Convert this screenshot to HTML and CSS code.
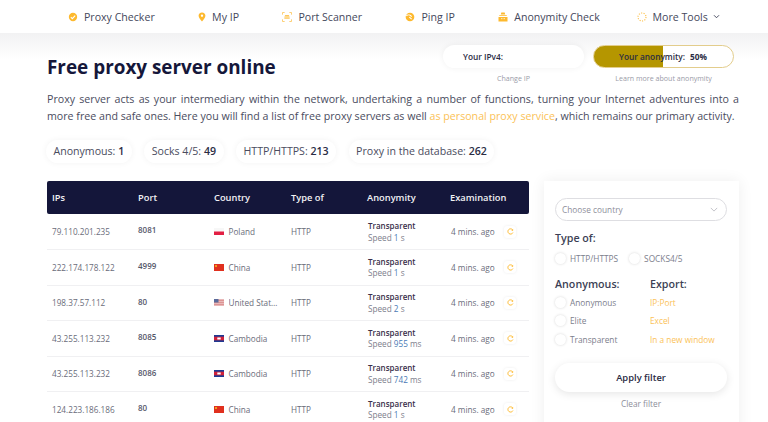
FILE: index.html
```html
<!DOCTYPE html>
<html lang="en">
<head>
<meta charset="utf-8">
<title>Free proxy server online</title>
<link rel="stylesheet" href="styles.css">
</head>
<body>
<nav class="nav">
  <a class="nav-item"><svg class="ico" viewBox="0 0 12 12"><circle cx="6" cy="6" r="5" fill="#fdb92e"/><path d="M3.4 6.2 5.2 8l3.4-3.6" fill="none" stroke="#fff" stroke-width="1.3"/></svg>Proxy Checker</a>
  <a class="nav-item"><svg class="ico ico-pin" viewBox="0 0 9 12"><path d="M4.5.6C2 .6.4 2.4.4 4.6c0 2.6 2.6 5 4.1 6.8C6 9.600 8.600 7.200 8.600 4.600 8.600 2.400 7 .6 4.500.6Z" fill="#fdb92e"/><circle cx="4.500" cy="4.500" r="1.400" fill="#fff"/></svg>My IP</a>
  <a class="nav-item"><svg class="ico" viewBox="0 0 12 12"><path d="M.6 3.200V.6h2.600M8.800.6h2.600v2.600M.6 8.800v2.600h2.600M8.800 11.400h2.600V8.800" fill="none" stroke="#fdc75a" stroke-width="1"/><path d="M2.800 6 3.800 3.500h4.400l1 2.500v2.200H2.800Z" fill="#fdc75a"/><path d="M2 6h8" stroke="#fff" stroke-width=".8"/></svg>Port Scanner</a>
  <a class="nav-item"><svg class="ico" viewBox="0 0 12 12"><circle cx="6" cy="6" r="5.200" fill="#fdb92e"/><path d="M1.500 4.500C3.500 3 6.500 3.500 8 5.500M8 8.500 5.200 6.200" fill="none" stroke="#fff" stroke-width="1.300"/></svg>Ping IP</a>
  <a class="nav-item"><svg class="ico" viewBox="0 0 12 12"><path d="M4 .5h4l.6 2.500H3.400ZM1.500 3.600h9v.9h-9ZM.6 6h10.800v5.500H.6Z" fill="#fdb92e"/><path d="M3.800 8h1.500M6.700 8h1.500" stroke="#fff" stroke-width="1"/></svg>Anonymity Check</a>
  <a class="nav-item nav-more"><svg class="ico" viewBox="0 0 12 12"><circle cx="6" cy="6" r="4.800" fill="none" stroke="#fdc04a" stroke-width="1.400" stroke-dasharray="1.300 1.700"/></svg>More Tools<svg class="chev" viewBox="0 0 8 6"><path d="M1 1.500 4 4.500 7 1.500" fill="none" stroke="#3c3f55" stroke-width="1.100"/></svg></a>
</nav>
<main class="main">
  <section class="top">
    <h1 class="title">Free proxy server online</h1>
    <div class="status">
      <div class="status-col">
        <div class="pill-ip">Your IPv4:</div>
        <a class="caption">Change IP</a>
      </div>
      <div class="status-col">
        <div class="pill-anon">Your anonymity:<b class="pct">50%</b></div>
        <a class="caption">Learn more about anonymity</a>
      </div>
    </div>
  </section>
  <p class="lead">Proxy server acts as your intermediary within the network, undertaking a number of functions, turning your Internet adventures into a more free and safe ones. Here you will find a list of free proxy servers as well <a class="link">as personal proxy service</a>, which remains our primary activity.</p>
  <ul class="stats">
    <li class="stat">Anonymous: <b>1</b></li>
    <li class="stat">Socks 4/5: <b>49</b></li>
    <li class="stat">HTTP/HTTPS: <b>213</b></li>
    <li class="stat">Proxy in the database: <b>262</b></li>
  </ul>
  <div class="content">
    <table class="proxies">
      <thead>
        <tr><th class="c-ip">IPs</th><th class="c-port">Port</th><th class="c-country">Country</th><th class="c-type">Type of</th><th class="c-anon">Anonymity</th><th class="c-exam">Examination</th></tr>
      </thead>
      <tbody>
        <tr><td>79.110.201.235</td><td class="port">8081</td><td><span class="country"><svg class="flag" viewBox="0 0 10 7"><rect width="10" height="3.500" fill="#f7f7f7"/><rect y="3.500" width="10" height="3.500" fill="#e21f43"/></svg>Poland</span></td><td>HTTP</td><td><b class="level">Transparent</b><span class="speed">Speed <i>1</i> s</span></td><td><span class="exam">4 mins. ago<span class="refresh"><svg viewBox="0 0 8 8"><path d="M6.500 2.200A3 3 0 1 0 6.800 5.200" fill="none" stroke="#fdb92e" stroke-width="1.100"/><path d="M7 .8v2.200H4.900" fill="#fdb92e"/></svg></span></span></td></tr>
        <tr><td>222.174.178.122</td><td class="port">4999</td><td><span class="country"><svg class="flag" viewBox="0 0 10 7"><rect width="10" height="7" fill="#e0301e"/><rect x="1" y="1" width="2" height="2" fill="#f0a01e"/></svg>China</span></td><td>HTTP</td><td><b class="level">Transparent</b><span class="speed">Speed <i>1</i> s</span></td><td><span class="exam">4 mins. ago<span class="refresh"><svg viewBox="0 0 8 8"><path d="M6.500 2.200A3 3 0 1 0 6.800 5.200" fill="none" stroke="#fdb92e" stroke-width="1.100"/><path d="M7 .8v2.200H4.900" fill="#fdb92e"/></svg></span></span></td></tr>
        <tr><td>198.37.57.112</td><td class="port">80</td><td><span class="country"><svg class="flag" viewBox="0 0 10 7"><rect width="10" height="7" fill="#e8b8b8"/><path d="M0 1.500h10M0 3.500h10M0 5.500h10" stroke="#d98a8a" stroke-width=".8"/><rect width="4.500" height="3.500" fill="#5a6a9a"/></svg><span class="clip">United States</span></span></td><td>HTTP</td><td><b class="level">Transparent</b><span class="speed">Speed <i>2</i> s</span></td><td><span class="exam">4 mins. ago<span class="refresh"><svg viewBox="0 0 8 8"><path d="M6.500 2.200A3 3 0 1 0 6.800 5.200" fill="none" stroke="#fdb92e" stroke-width="1.100"/><path d="M7 .8v2.200H4.900" fill="#fdb92e"/></svg></span></span></td></tr>
        <tr><td>43.255.113.232</td><td class="port">8085</td><td><span class="country"><svg class="flag" viewBox="0 0 10 7"><rect width="10" height="7" fill="#1f3a93"/><rect y="1.700" width="10" height="3.600" fill="#d0213a"/><rect x="3.300" y="2.500" width="3.400" height="2" fill="#fff"/></svg>Cambodia</span></td><td>HTTP</td><td><b class="level">Transparent</b><span class="speed">Speed <i>955</i> ms</span></td><td><span class="exam">4 mins. ago<span class="refresh"><svg viewBox="0 0 8 8"><path d="M6.500 2.200A3 3 0 1 0 6.800 5.200" fill="none" stroke="#fdb92e" stroke-width="1.100"/><path d="M7 .8v2.200H4.900" fill="#fdb92e"/></svg></span></span></td></tr>
        <tr><td>43.255.113.232</td><td class="port">8086</td><td><span class="country"><svg class="flag" viewBox="0 0 10 7"><rect width="10" height="7" fill="#1f3a93"/><rect y="1.700" width="10" height="3.600" fill="#d0213a"/><rect x="3.300" y="2.500" width="3.400" height="2" fill="#fff"/></svg>Cambodia</span></td><td>HTTP</td><td><b class="level">Transparent</b><span class="speed">Speed <i>742</i> ms</span></td><td><span class="exam">4 mins. ago<span class="refresh"><svg viewBox="0 0 8 8"><path d="M6.500 2.200A3 3 0 1 0 6.800 5.200" fill="none" stroke="#fdb92e" stroke-width="1.100"/><path d="M7 .8v2.200H4.900" fill="#fdb92e"/></svg></span></span></td></tr>
        <tr><td>124.223.186.186</td><td class="port">80</td><td><span class="country"><svg class="flag" viewBox="0 0 10 7"><rect width="10" height="7" fill="#e0301e"/><rect x="1" y="1" width="2" height="2" fill="#f0a01e"/></svg>China</span></td><td>HTTP</td><td><b class="level">Transparent</b><span class="speed">Speed <i>1</i> s</span></td><td><span class="exam">4 mins. ago<span class="refresh"><svg viewBox="0 0 8 8"><path d="M6.500 2.200A3 3 0 1 0 6.800 5.200" fill="none" stroke="#fdb92e" stroke-width="1.100"/><path d="M7 .8v2.200H4.900" fill="#fdb92e"/></svg></span></span></td></tr>
      </tbody>
    </table>
    <aside class="filter">
      <div class="select">Choose country<svg class="select-chev" viewBox="0 0 10 6"><path d="M1 1 5 5 9 1" fill="none" stroke="#b5b5bd" stroke-width="1"/></svg></div>
      <h3 class="f-title">Type of:</h3>
      <div class="type-row">
        <label class="radio"><span class="dot"></span>HTTP/HTTPS</label>
        <label class="radio"><span class="dot"></span>SOCKS4/5</label>
      </div>
      <div class="f-cols">
        <div class="f-col-a">
          <h3 class="f-title">Anonymous:</h3>
          <label class="radio r-row"><span class="dot"></span>Anonymous</label>
          <label class="radio r-row"><span class="dot"></span>Elite</label>
          <label class="radio r-row"><span class="dot"></span>Transparent</label>
        </div>
        <div class="f-col-b">
          <h3 class="f-title">Export:</h3>
          <a class="export r-row">IP:Port</a>
          <a class="export r-row">Excel</a>
          <a class="export r-row">In a new window</a>
        </div>
      </div>
      <button class="apply">Apply filter</button>
      <a class="clear">Clear filter</a>
    </aside>
  </div>
</main>
</body>
</html>
```
FILE: styles.css
```css
* { box-sizing: border-box; }
html, body { margin: 0; height: 422px; overflow: hidden; background: #fff; }
body { font-family: "Open Sans", sans-serif; color: #3c3f55; }
.nav { height: 33px; background: #fff; display: flex; align-items: center; padding-left: 68px; gap: 43.400px; font-size: 10.600px; position: relative; }
.nav-item { display: flex; align-items: center; gap: 6px; white-space: nowrap; color: #45485c; }
.nav-more { margin-left: -6.500px; }
.ico { width: 10px; height: 10px; flex: none; }
.ico-pin { width: 8px; }
.chev { width: 7px; height: 5px; margin-left: -1px; }
.main { padding: 12px 29px 0 47px; background: linear-gradient(#f2f2f3 0, #fff 27px); height: 389px; overflow: hidden; }
.top { display: flex; justify-content: space-between; height: 46px; }
.title { margin: 10px 0 0; font-size: 18.900px; line-height: 24px; font-weight: 700; color: #15173a; }
.status { display: flex; gap: 9px; margin-right: 5px; }
.status-col { width: 141px; display: flex; flex-direction: column; align-items: center; }
.pill-ip, .pill-anon { width: 100%; height: 23px; border-radius: 12px; font-size: 8.300px; font-weight: 600; line-height: 23px; color: #2a2c44; }
.pill-ip { background: #fff; padding-left: 20px; box-shadow: 0 0 6px rgba(0,0,0,.06); }
.pill-anon { background: linear-gradient(90deg, #b59600 50%, #fff 50%); border: 1px solid #e3cd8c; line-height: 21px; padding-left: 25px; }
.pct { margin-left: 5px; font-weight: 700; }
.caption { font-size: 7.100px; line-height: 10px; margin-top: 5px; color: #9a9ba8; }
.lead { margin: 0; font-size: 10.650px; line-height: 16.500px; text-align: justify; color: #4a4c5e; }
.link { color: #fbc257; }
.stats { list-style: none; margin: 16px 0 0 -1px; padding: 0; display: flex; gap: 12.500px; }
.stat { height: 23px; line-height: 23px; padding: 0 7.500px; border-radius: 12px; background: #fff; font-size: 10.600px; color: #4a4c5e; box-shadow: 0 0 6px rgba(0,0,0,.05); }
.stat b { font-weight: 600; color: #2a2c44; }
.content { display: flex; gap: 15px; margin-top: 18px; align-items: flex-start; }
.proxies { width: 482px; flex: none; border-collapse: collapse; table-layout: fixed; font-size: 8.200px; color: #6a6c7a; }
.proxies th { height: 33px; background: #14163a; color: #f2f2f5; font-size: 9.300px; font-weight: 600; text-align: left; padding: 0 0 0 5px; }
.proxies th:first-child { border-radius: 2px 0 0 2px; }
.proxies th:last-child { border-radius: 0 2px 2px 0; }
.proxies td { height: 35.500px; padding: 0 0 0 5px; border-bottom: 1px solid #f0f0f2; vertical-align: middle; line-height: 11.500px; }
.c-ip { width: 86px; } .c-port { width: 76px; } .c-country { width: 77px; } .c-type { width: 76px; } .c-anon { width: 83px; } .c-exam { width: 84px; }
.port { font-weight: 600; font-size: 8px; color: #55576a; }
.proxies td.port { padding-bottom: 3px; }
.country { display: flex; align-items: center; gap: 4.500px; }
.flag { width: 10px; height: 7px; flex: none; }
.clip { display: block; width: 49px; overflow: hidden; text-overflow: ellipsis; white-space: nowrap; }
.level { display: block; font-weight: 600; font-size: 8px; color: #3a2f4a; padding-left: 1px; }
.speed { display: block; color: #7c7e8c; padding-left: 1px; }
.speed i { font-style: normal; color: #4a7ab5; }
.exam { display: flex; align-items: center; justify-content: space-between; padding-right: 13px; padding-left: 1px; white-space: nowrap; }
.refresh { width: 12px; height: 12px; border-radius: 3px; background: #fff; box-shadow: 0 0 3px rgba(0,0,0,.08); display: flex; align-items: center; justify-content: center; }
.refresh svg { width: 7px; height: 7px; }
.filter { width: 195px; height: 260px; background: #fff; box-shadow: 0 0 14px rgba(0,0,0,.07); padding: 17px 12px 0 11px; display: flex; flex-direction: column; }
.select { height: 23px; flex: none; border: 1px solid #dedee2; border-radius: 12px; display: flex; align-items: center; justify-content: space-between; padding: 0 8px 0 6px; font-size: 8.300px; color: #8d8e9a; }
.select-chev { width: 8px; height: 5px; }
.f-title { margin: 0; font-size: 10.700px; line-height: 16px; font-weight: 600; color: #3c3f55; }
.filter > .f-title { margin-top: 9px; }
.type-row { display: flex; gap: 11px; margin-top: 7px; }
.radio { display: flex; align-items: center; gap: 4px; font-size: 8.300px; color: #7c7e8c; }
.dot { width: 11px; height: 11px; border-radius: 50%; background: #fff; box-shadow: 0 0 3px rgba(0,0,0,.16); flex: none; }
.f-cols { display: flex; margin-top: 12px; }
.f-col-a { width: 95px; }
.r-row { display: flex; align-items: center; height: 18.500px; }
.export { font-size: 8.300px; color: #fbc257; }
.f-cols .f-title { margin-bottom: 1px; }
.apply { height: 29px; flex: none; margin-top: 14px; border: 0; border-radius: 15px; background: #fff; box-shadow: 0 2px 8px rgba(0,0,0,.1); font: 600 9.400px "Open Sans", sans-serif; color: #2a2c44; }
.clear { margin-top: 6px; text-align: center; font-size: 8.300px; color: #8d8e9a; }
```
